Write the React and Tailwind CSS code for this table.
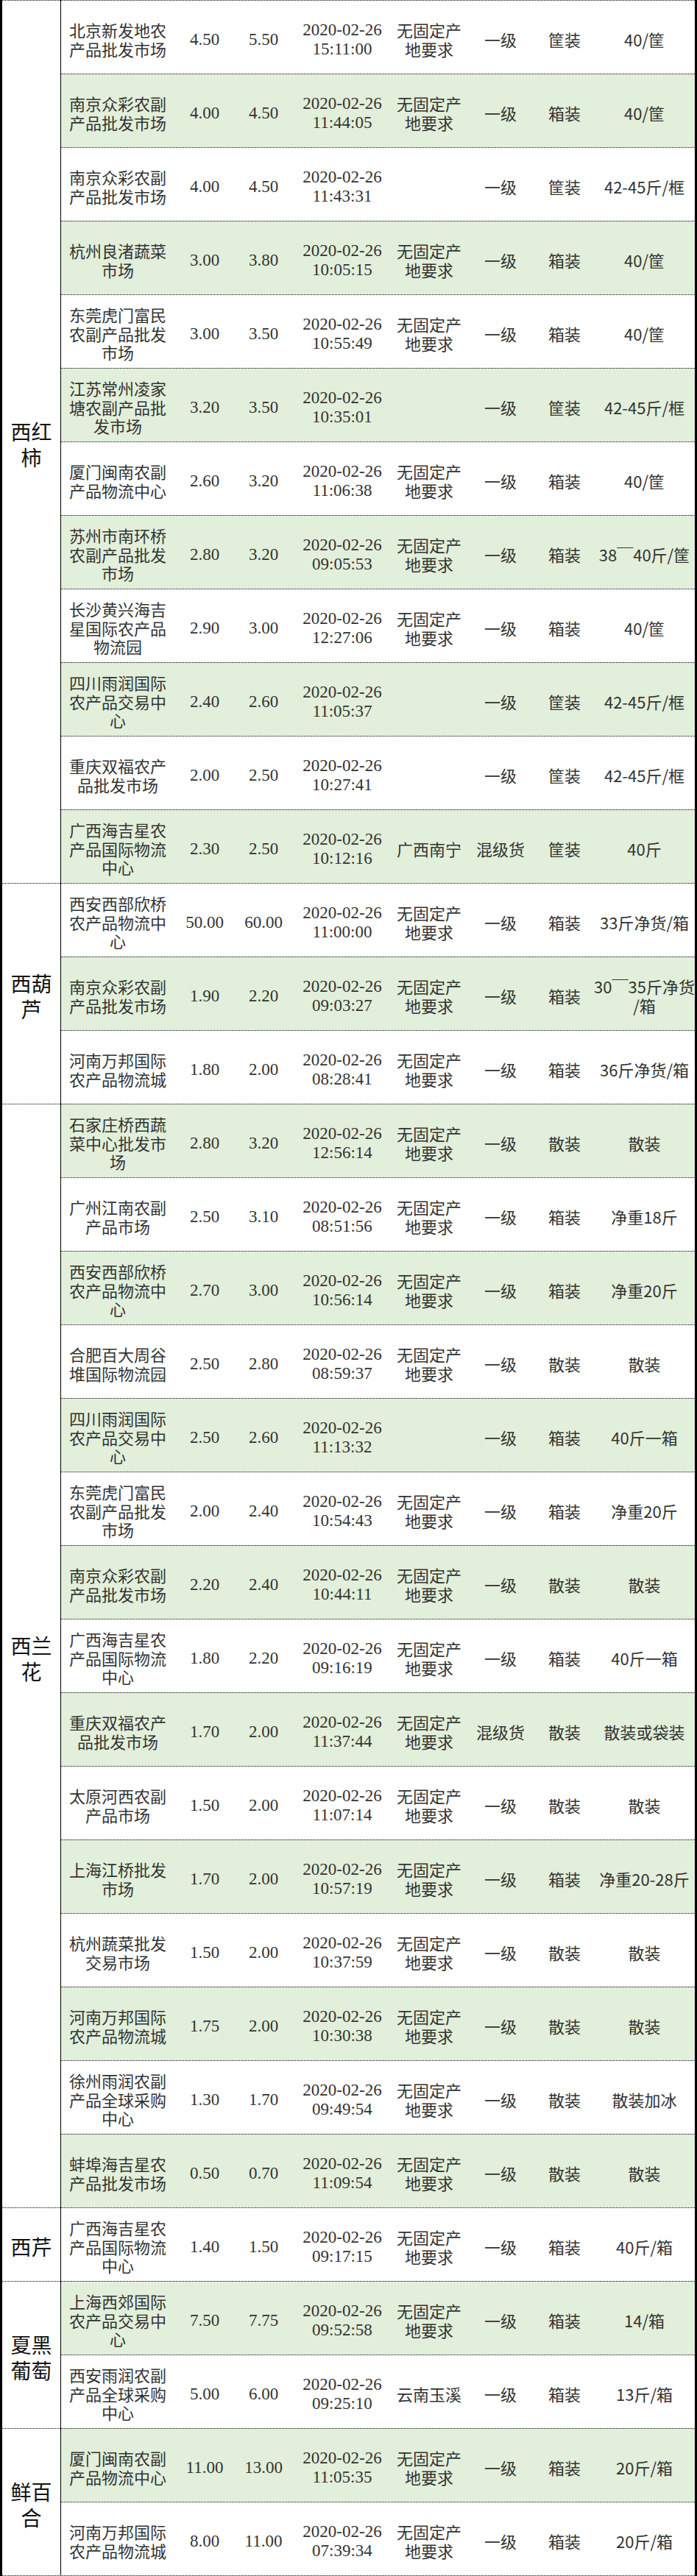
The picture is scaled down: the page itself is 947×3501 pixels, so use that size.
import React from "react";

const groups = [
  {
    name: ["西红", "柿"],
    rows: [
      [["北京新发地农", "产品批发市场"], "4.50", "5.50", "15:11:00", true, "一级", "筐装", ["40/筐"]],
      [["南京众彩农副", "产品批发市场"], "4.00", "4.50", "11:44:05", true, "一级", "箱装", ["40/筐"]],
      [["南京众彩农副", "产品批发市场"], "4.00", "4.50", "11:43:31", false, "一级", "筐装", ["42-45斤/框"]],
      [["杭州良渚蔬菜", "市场"], "3.00", "3.80", "10:05:15", true, "一级", "箱装", ["40/筐"]],
      [["东莞虎门富民", "农副产品批发", "市场"], "3.00", "3.50", "10:55:49", true, "一级", "箱装", ["40/筐"]],
      [["江苏常州凌家", "塘农副产品批", "发市场"], "3.20", "3.50", "10:35:01", false, "一级", "筐装", ["42-45斤/框"]],
      [["厦门闽南农副", "产品物流中心"], "2.60", "3.20", "11:06:38", true, "一级", "箱装", ["40/筐"]],
      [["苏州市南环桥", "农副产品批发", "市场"], "2.80", "3.20", "09:05:53", true, "一级", "箱装", ["38￣40斤/筐"]],
      [["长沙黄兴海吉", "星国际农产品", "物流园"], "2.90", "3.00", "12:27:06", true, "一级", "箱装", ["40/筐"]],
      [["四川雨润国际", "农产品交易中", "心"], "2.40", "2.60", "11:05:37", false, "一级", "筐装", ["42-45斤/框"]],
      [["重庆双福农产", "品批发市场"], "2.00", "2.50", "10:27:41", false, "一级", "筐装", ["42-45斤/框"]],
      [["广西海吉星农", "产品国际物流", "中心"], "2.30", "2.50", "10:12:16", "广西南宁", "混级货", "筐装", ["40斤"]],
    ],
  },
  {
    name: ["西葫", "芦"],
    rows: [
      [["西安西部欣桥", "农产品物流中", "心"], "50.00", "60.00", "11:00:00", true, "一级", "箱装", ["33斤净货/箱"]],
      [["南京众彩农副", "产品批发市场"], "1.90", "2.20", "09:03:27", true, "一级", "箱装", ["30￣35斤净货", "/箱"]],
      [["河南万邦国际", "农产品物流城"], "1.80", "2.00", "08:28:41", true, "一级", "箱装", ["36斤净货/箱"]],
    ],
  },
  {
    name: ["西兰", "花"],
    rows: [
      [["石家庄桥西蔬", "菜中心批发市", "场"], "2.80", "3.20", "12:56:14", true, "一级", "散装", ["散装"]],
      [["广州江南农副", "产品市场"], "2.50", "3.10", "08:51:56", true, "一级", "箱装", ["净重18斤"]],
      [["西安西部欣桥", "农产品物流中", "心"], "2.70", "3.00", "10:56:14", true, "一级", "箱装", ["净重20斤"]],
      [["合肥百大周谷", "堆国际物流园"], "2.50", "2.80", "08:59:37", true, "一级", "散装", ["散装"]],
      [["四川雨润国际", "农产品交易中", "心"], "2.50", "2.60", "11:13:32", false, "一级", "箱装", ["40斤一箱"]],
      [["东莞虎门富民", "农副产品批发", "市场"], "2.00", "2.40", "10:54:43", true, "一级", "箱装", ["净重20斤"]],
      [["南京众彩农副", "产品批发市场"], "2.20", "2.40", "10:44:11", true, "一级", "散装", ["散装"]],
      [["广西海吉星农", "产品国际物流", "中心"], "1.80", "2.20", "09:16:19", true, "一级", "箱装", ["40斤一箱"]],
      [["重庆双福农产", "品批发市场"], "1.70", "2.00", "11:37:44", true, "混级货", "散装", ["散装或袋装"]],
      [["太原河西农副", "产品市场"], "1.50", "2.00", "11:07:14", true, "一级", "散装", ["散装"]],
      [["上海江桥批发", "市场"], "1.70", "2.00", "10:57:19", true, "一级", "箱装", ["净重20-28斤"]],
      [["杭州蔬菜批发", "交易市场"], "1.50", "2.00", "10:37:59", true, "一级", "散装", ["散装"]],
      [["河南万邦国际", "农产品物流城"], "1.75", "2.00", "10:30:38", true, "一级", "散装", ["散装"]],
      [["徐州雨润农副", "产品全球采购", "中心"], "1.30", "1.70", "09:49:54", true, "一级", "散装", ["散装加冰"]],
      [["蚌埠海吉星农", "产品批发市场"], "0.50", "0.70", "11:09:54", true, "一级", "散装", ["散装"]],
    ],
  },
  {
    name: ["西芹"],
    rows: [
      [["广西海吉星农", "产品国际物流", "中心"], "1.40", "1.50", "09:17:15", true, "一级", "箱装", ["40斤/箱"]],
    ],
  },
  {
    name: ["夏黑", "葡萄"],
    rows: [
      [["上海西郊国际", "农产品交易中", "心"], "7.50", "7.75", "09:52:58", true, "一级", "箱装", ["14/箱"]],
      [["西安雨润农副", "产品全球采购", "中心"], "5.00", "6.00", "09:25:10", "云南玉溪", "一级", "箱装", ["13斤/箱"]],
    ],
  },
  {
    name: ["鲜百", "合"],
    rows: [
      [["厦门闽南农副", "产品物流中心"], "11.00", "13.00", "11:05:35", true, "一级", "箱装", ["20斤/箱"]],
      [["河南万邦国际", "农产品物流城"], "8.00", "11.00", "07:39:34", true, "一级", "箱装", ["20斤/箱"]],
    ],
  },
];

const cjk = { fontFamily: '"Noto Sans CJK SC", "Noto Sans", sans-serif' };
const serif = { fontFamily: '"Liberation Serif", "Noto Sans CJK SC", serif' };

function Lines({ lines }) {
  return (
    <div className="flex flex-col items-center whitespace-nowrap">
      {lines.map((l, i) => (
        <span key={i}>{l}</span>
      ))}
    </div>
  );
}

function Row({ r, idx }) {
  const [market, lo, hi, time, origin, grade, pack, spec] = r;
  const bg = idx % 2 === 1 ? "bg-[#e2efda]" : "bg-white";
  let originLines = [];
  if (origin === true) originLines = ["无固定产", "地要求"];
  else if (typeof origin === "string") originLines = [origin];
  return (
    <div
      className={`flex h-[100px] items-center border-t border-dotted border-black ${bg} pt-[6px] text-[22px] leading-[25.5px] text-[#333]`}
      style={cjk}
    >
      <div className="flex w-[154px] justify-center">
        <Lines lines={market} />
      </div>
      <div className="flex w-[82px] justify-center text-[23px]" style={serif}>
        {lo}
      </div>
      <div className="flex w-[78px] justify-center text-[23px]" style={serif}>
        {hi}
      </div>
      <div className="flex w-[136px] justify-center text-[23px]" style={serif}>
        <Lines lines={["2020-02-26", time]} />
      </div>
      <div className="flex w-[100px] justify-center">
        <Lines lines={originLines} />
      </div>
      <div className="flex w-[94px] justify-center">{grade}</div>
      <div className="flex w-[80px] justify-center">{pack}</div>
      <div className="flex w-[137px] justify-center">
        <Lines lines={spec} />
      </div>
    </div>
  );
}

export default function App() {
  let idx = 0;
  return (
    <div className="w-[947px] bg-white border-x-[3px] border-black">
      {groups.map((g, gi) => (
        <div key={gi} className="flex">
          <div
            className="flex w-[79px] shrink-0 items-center justify-center border-t border-dotted border-black bg-white pt-[6px] text-[28px] leading-[35px] text-[#111]"
            style={cjk}
          >
            <Lines lines={g.name} />
          </div>
          <div className="flex flex-1 flex-col border-l border-black">
            {g.rows.map((r) => {
              const i = idx++;
              return <Row key={i} r={r} idx={i} />;
            })}
          </div>
        </div>
      ))}
      <div className="border-t border-dotted border-black" />
    </div>
  );
}
